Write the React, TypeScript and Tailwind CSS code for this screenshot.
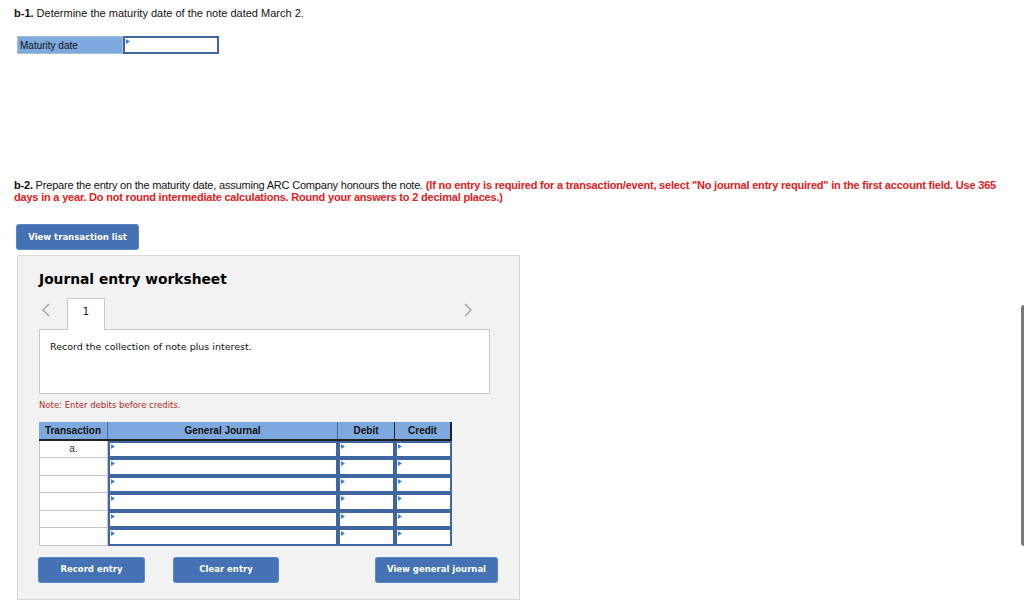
import type { ReactNode } from 'react';

const arial = { fontFamily: '"Liberation Sans", Arial, sans-serif' };
const verdana = { fontFamily: '"DejaVu Sans", Verdana, sans-serif' };

// little blue flag in the corner of an editable cell
function Flag() {
  return (
    <svg width="4" height="5" viewBox="0 0 4 5" className="absolute left-[1px] top-[1px]">
      <path d="M0 0 L4 2.5 L0 5 Z" fill="#3d7fd0" />
    </svg>
  );
}

function Chevron({ dir, className }: { dir: 'left' | 'right'; className: string }) {
  return (
    <svg width="8" height="14" viewBox="0 0 8 14" className={`absolute ${className}`}>
      <path
        d={dir === 'left' ? 'M7 1 L1 7 L7 13' : 'M1 1 L7 7 L1 13'}
        fill="none"
        stroke="#9a9a9a"
        strokeWidth="1.2"
      />
    </svg>
  );
}

function InputCell({ width }: { width: string }) {
  return (
    <div className={`relative ${width} h-full border-2 border-[#3e67a2] bg-white`}>
      <Flag />
    </div>
  );
}

function BlueButton({ children, className = '' }: { children: ReactNode; className?: string }) {
  return (
    <button
      style={verdana}
      className={`h-[24px] rounded-[2px] bg-[#4472b5] text-[8.5px] font-bold text-white shadow-[0_0_0_1px_#5b87c6] ${className}`}
    >
      {children}
    </button>
  );
}

const rows = ['a.', '', '', '', '', ''];

export default function App() {
  return (
    <div className="relative h-[610px] w-[1024px] overflow-hidden bg-white text-[#111]" style={arial}>
      <div className="pl-[14px] pt-[7px]">
        <p className="text-[11px] leading-[13px]">
          <b>b-1.</b> Determine the maturity date of the note dated March 2.
        </p>

        <div className="ml-[3px] mt-[16px] flex h-[18px] w-[202px]">
          <div className="flex w-[106px] items-center border border-[#a9bcd6] bg-[#7ea9de] pl-[2px] text-[10px]">
            Maturity date
          </div>
          <div className="relative w-[96px] border-2 border-[#3e67a2] bg-white">
            <Flag />
          </div>
        </div>

        <div className="mt-[125px] pr-[4px] text-[11px] leading-[12px] tracking-[-0.2px]">
          <b>b-2.</b> Prepare the entry on the maturity date, assuming ARC Company honours the note.{' '}
          <span className="font-bold text-[#e3201b]">
            (If no entry is required for a transaction/event, select "No journal entry required" in the first account
            field. Use 365 days in a year. Do not round intermediate calculations. Round your answers to 2 decimal
            places.)
          </span>
        </div>

        <BlueButton className="ml-[3px] mt-[22px] w-[121px]">View transaction list</BlueButton>
      </div>

      <div className="ml-[17px] mt-[6px] h-[345px] w-[503px] border border-[#d6d6d6] bg-[#f2f2f2] px-[21px]" style={verdana}>
        <h2 className="mt-[14px] text-[13.8px] font-bold leading-[18px] text-black">Journal entry worksheet</h2>

        <div className="relative mt-[10px] flex h-[31px] items-end">
          <Chevron dir="left" className="left-[3px] top-[5px]" />
          <Chevron dir="right" className="right-[26px] top-[5px]" />
          <div className="relative z-10 ml-[28px] -mb-px flex h-[32px] w-[38px] justify-center border border-b-0 border-[#c9c9c9] bg-white pt-[5px] text-[10px]">
            1
          </div>
        </div>

        <div className="h-[65px] w-[451px] border border-[#c9c9c9] bg-white px-[10px] pt-[10px] text-[9.5px] text-[#111]">
          Record the collection of note plus interest.
        </div>

        <p className="mt-[5px] text-[8.5px] text-[#b22a26]">Note: Enter debits before credits.</p>

        <div className="mt-[10px] w-[413px]" style={arial}>
          <div className="flex h-[19px] border-b-2 border-[#222] bg-[#7ea9de] text-[10px] font-bold text-[#111]">
            <div className="flex w-[69px] items-center justify-center border-r border-[#4a6c9a]">Transaction</div>
            <div className="flex w-[230px] items-center justify-center border-r border-[#4a6c9a]">General Journal</div>
            <div className="flex w-[57px] items-center justify-center border-r border-[#222]">Debit</div>
            <div className="flex w-[57px] items-center justify-center border-r-2 border-[#222]">Credit</div>
          </div>
          {rows.map((label, i) => (
            <div key={i} className="flex h-[17.5px]">
              <div className="flex w-[69px] justify-center border border-t-0 border-[#c6c6c6] bg-white text-[10px] leading-[15px] text-[#333]">
                {label}
              </div>
              <InputCell width="w-[230px]" />
              <InputCell width="w-[57px]" />
              <InputCell width="w-[57px]" />
            </div>
          ))}
        </div>

        <div className="mt-[12px] flex">
          <BlueButton className="w-[105px]">Record entry</BlueButton>
          <BlueButton className="ml-[30px] w-[104px]">Clear entry</BlueButton>
          <BlueButton className="ml-[98px] w-[121px]">View general journal</BlueButton>
        </div>
      </div>

      {/* page scrollbar thumb */}
      <div className="absolute right-0 top-[305px] h-[241px] w-[3px] rounded-l-full bg-[#7a7a7a]" />
    </div>
  );
}
